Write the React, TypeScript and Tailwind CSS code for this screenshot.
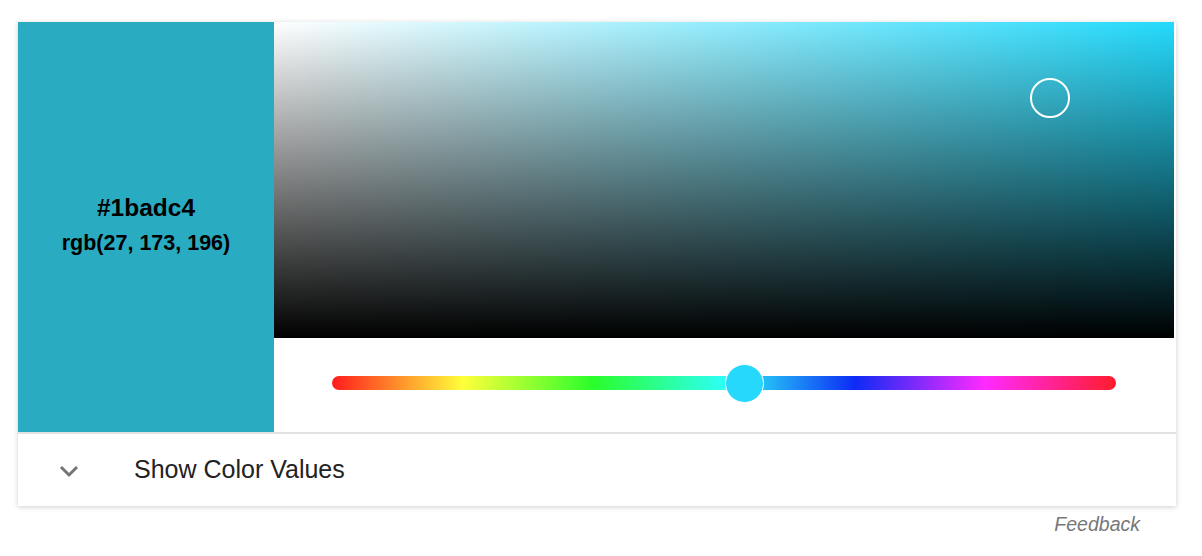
import React from "react";

const hueStops =
  "linear-gradient(to right, #ff1c1c 0%, #ffff3a 16.7%, #2afe2a 33.3%, #2dfff6 50%, #0d2bf5 66.7%, #ff2aff 83.3%, #ff1c2c 100%)";

export default function App() {
  return (
    <div className="min-h-[556px] bg-white pl-[18px] pt-[22px] font-['Liberation_Sans',Arial,sans-serif]">
      <div className="w-[1158px] bg-white shadow-[0_1px_5px_rgba(32,33,36,0.22)]">
        <div className="flex">
          {/* current colour */}
          <div className="flex h-[410px] w-[256px] flex-col items-center justify-center bg-[#29abc2] pb-[6px] font-bold text-black">
            <div className="text-[24.5px] leading-[28px]">#1badc4</div>
            <div className="mt-[9px] text-[21.5px] leading-[24px]">rgb(27, 173, 196)</div>
          </div>

          <div className="flex w-[900px] flex-col">
            {/* saturation / value area */}
            <div className="relative h-[316px] bg-[#24dafc]">
              <div className="absolute inset-0 bg-gradient-to-r from-white to-transparent" />
              <div className="absolute inset-0 bg-gradient-to-b from-transparent to-black" />
              <div className="absolute left-[756px] top-[56px] h-[40px] w-[40px] rounded-full border-2 border-white" />
            </div>

            {/* hue slider */}
            <div className="flex h-[94px] items-center px-[58px] pb-[5px]">
              <div className="relative h-[14px] w-full rounded-full" style={{ background: hueStops }}>
                <div className="absolute left-[393px] top-[-12px] h-[39px] w-[39px] rounded-full border-[1.5px] border-white bg-[#26d8fc]" />
              </div>
            </div>
          </div>
        </div>

        <div className="h-[2px] bg-[#e2e2e2]" />

        <button className="flex h-[72px] w-full items-center text-left">
          <svg className="ml-[41px] mt-[2px]" width="20" height="13" viewBox="0 0 20 13" fill="none">
            <path d="M2 2 L10 10 L18 2" stroke="#757575" strokeWidth="3" />
          </svg>
          <span className="ml-[55px] text-[25px] text-[#222]">Show Color Values</span>
        </button>
      </div>

      <div className="flex w-[1158px] justify-end pr-[36px] pt-[4px]">
        <span className="text-[19.5px] italic text-[#777]">Feedback</span>
      </div>
    </div>
  );
}
